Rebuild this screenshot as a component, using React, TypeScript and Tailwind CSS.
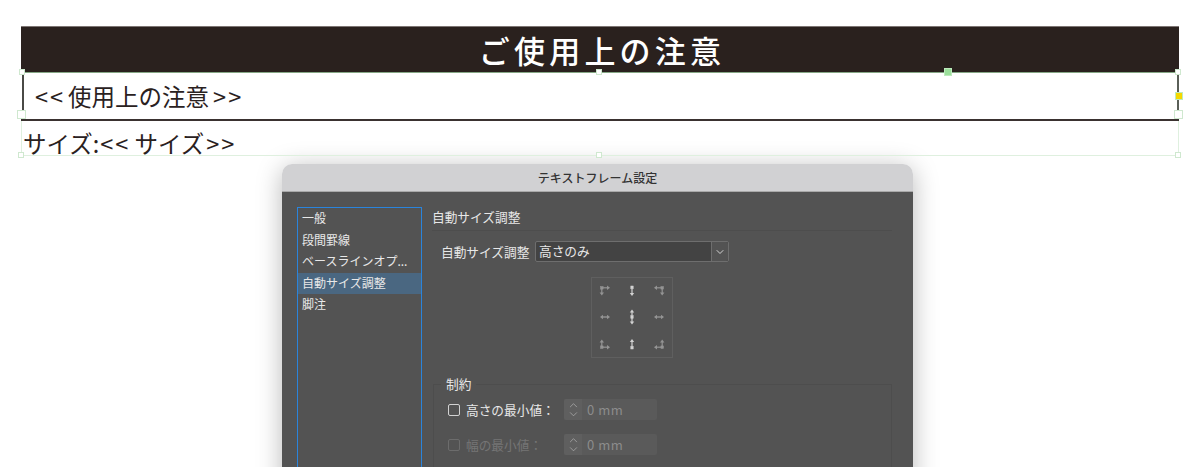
import { ChevronDown, ChevronUp } from 'lucide-react';

const jp = { fontFamily: '"Noto Sans CJK JP", "Noto Sans", sans-serif' };

type AnchorKind = 'corner' | 'edge' | 'side' | 'center';

// one cell of the auto-size anchor grid
function Anchor({ kind, flip = '', bright = false }: { kind: AnchorKind; flip?: string; bright?: boolean }) {
  const color = bright ? 'text-[#d2d2d2]' : 'text-[#949494]';
  return (
    <div className="flex items-center justify-center">
      <svg viewBox="0 0 18 18" className={`w-[18px] h-[18px] ${color} ${flip}`} fill="currentColor" stroke="currentColor">
        {kind === 'corner' && (
          <>
            <rect x="4.5" y="4.5" width="2.6" height="2.6" strokeWidth="0.5" />
            <path d="M7 5.8H11.5" strokeWidth="1.2" fill="none" />
            <path d="M11 3.6L14 5.8L11 8Z" strokeWidth="0" />
            <path d="M5.8 7V11" strokeWidth="1.2" fill="none" />
            <path d="M3.6 10.5L5.8 13.5L8 10.5Z" strokeWidth="0" />
          </>
        )}
        {kind === 'edge' && (
          <>
            <rect x="7.8" y="4" width="2.4" height="2.8" strokeWidth="0.5" />
            <path d="M9 6.5V11.5" strokeWidth="1.2" fill="none" />
            <path d="M6.8 11L9 14L11.2 11Z" strokeWidth="0" />
          </>
        )}
        {kind === 'side' && (
          <>
            <path d="M6 9H12" strokeWidth="1.4" fill="none" />
            <path d="M7 6.8L4 9L7 11.2Z" strokeWidth="0" />
            <path d="M11 6.8L14 9L11 11.2Z" strokeWidth="0" />
          </>
        )}
        {kind === 'center' && (
          <>
            <rect x="7.8" y="7.7" width="2.4" height="2.6" strokeWidth="0.5" />
            <path d="M9 3.5V14.5" strokeWidth="1.2" fill="none" />
            <path d="M6.8 4.4L9 1.4L11.2 4.4Z" strokeWidth="0" />
            <path d="M6.8 13.6L9 16.6L11.2 13.6Z" strokeWidth="0" />
          </>
        )}
      </svg>
    </div>
  );
}

function MinRow({ label, disabled = false }: { label: string; disabled?: boolean }) {
  return (
    <div className="flex items-center h-[21px] pl-[13.5px]">
      <div className={`w-[12px] h-[12px] rounded-[2px] border ${disabled ? 'border-[#6c6c6c]' : 'border-[#d2d2d2]'}`} />
      <div className={`ml-[6.5px] w-[98px] text-[12.7px] ${disabled ? 'text-[#757575]' : 'text-[#e8e8e8]'}`}>{label}</div>
      <div className="flex w-[93px] h-[21px] rounded-[2px] bg-[#5a5a5a]">
        <div className="flex flex-col items-center justify-center w-[18px] bg-[#5f5f5f] rounded-l-[2px] text-[#b0b0b0]">
          <ChevronUp size={13} strokeWidth={1.4} className="-mb-[2px]" />
          <ChevronDown size={13} strokeWidth={1.4} className="-mt-[2px]" />
        </div>
        <div className="ml-[5px] leading-[21px] text-[13px] tracking-[0.5px] text-[#8c8c8c]">0 mm</div>
      </div>
    </div>
  );
}

export default function App() {
  return (
    <div style={jp} className="w-[1200px] h-[467px] overflow-hidden bg-white pt-[26px] px-[21px]">
      <div className="relative w-[1158px]">
        <div className="h-[46px] bg-[#2a211e] border-t border-[#7d7573] flex items-center justify-center pl-[4px] text-white text-[31px] font-medium tracking-[4.2px] leading-none">
          ご使用上の注意
        </div>

        <div className="h-[49px] border-t border-[#86a886] border-b-2 border-b-[#3a3230] flex items-center">
          <div className="w-[1.5px] h-full bg-[#4a4a46] ml-[1px]" />
          <div className="ml-[11.5px] pt-[2px] text-[23.5px] leading-none text-[#2a211e]">
            <span className="tracking-[2px]">{'<<'}</span>
            <span className="ml-[3px]">使用上の注意</span>
            <span className="ml-[4px] tracking-[2px]">{'>>'}</span>
          </div>
          <div className="w-[2px] h-full bg-[#5a5f58] ml-auto" />
        </div>

        <div className="h-[35px] border-b border-x border-[#dff0df] flex items-end pl-[1px]">
          <div className="text-[23.5px] leading-[24px] text-[#2a211e]">
            <span>サイズ:</span>
            <span className="ml-[1px] tracking-[2px]">{'<<'}</span>
            <span className="ml-[4px]">サイズ</span>
            <span className="ml-[2px] tracking-[2px]">{'>>'}</span>
          </div>
        </div>

        {/* frame handles sit on top of the text frames */}
        <div className="absolute left-[-2px] top-[43px] w-[6px] h-[6px] bg-white border border-[#cfe8cf]" />
        <div className="absolute left-[575px] top-[43px] w-[6px] h-[6px] bg-white border border-[#cfe8cf]" />
        <div className="absolute left-[923px] top-[42px] w-[8px] h-[8px] bg-[#9bdf9b] border border-[#bdeabd]" />
        <div className="absolute left-[1154px] top-[43px] w-[6px] h-[6px] bg-white border border-[#cfe8cf]" />
        <div className="absolute left-[1154px] top-[66px] w-[8px] h-[8px] bg-[#f5d800] border border-[#bdeabd]" />
        <div className="absolute left-[-4px] top-[84px] w-[9px] h-[9px] bg-white border border-[#cfe8cf]" />
        <div className="absolute left-[1153px] top-[84px] w-[9px] h-[9px] bg-white border border-[#cfe8cf]" />
        <div className="absolute left-[-3px] top-[126px] w-[6px] h-[6px] bg-white border border-[#cfe8cf]" />
        <div className="absolute left-[575px] top-[126px] w-[6px] h-[6px] bg-white border border-[#cfe8cf]" />
        <div className="absolute left-[1154px] top-[126px] w-[6px] h-[6px] bg-white border border-[#cfe8cf]" />
      </div>

      <div className="ml-[261px] mt-[8px] w-[631px] h-[420px] rounded-t-[10px] shadow-[0_4px_26px_rgba(0,0,0,0.28)]">
        <div className="h-[28px] rounded-t-[10px] bg-[#d1d1d3] border-b border-[#a9a9a9] flex items-center justify-center text-[12px] font-medium text-[#333333]">
          テキストフレーム設定
        </div>
        <div className="flex h-[392px] bg-[#535353] pl-[15px] pt-[15px] text-[12.7px] text-[#e8e8e8]">
          <div className="w-[125px] h-[370px] border border-[#2a84dc] text-[12px]">
            <div className="h-[21.6px] pl-[4px] leading-[20px]">一般</div>
            <div className="h-[21.6px] pl-[4px] leading-[20px]">段間罫線</div>
            <div className="h-[21.6px] pl-[4px] leading-[20px]">ベースラインオプ...</div>
            <div className="h-[21.6px] pl-[4px] leading-[20px] bg-[#4a6781]">自動サイズ調整</div>
            <div className="h-[21.6px] pl-[4px] leading-[20px]">脚注</div>
          </div>

          <div className="ml-[10px] w-[460px]">
            <div className="h-[24px] leading-[20px] border-b border-[#4d4d4d]">自動サイズ調整</div>

            <div className="flex items-center mt-[10px] pl-[9px] h-[21px]">
              <div className="w-[94px]">自動サイズ調整</div>
              <div className="flex w-[194px] h-[21px] rounded-[2px] border border-[#6e6e6e] bg-[#434343]">
                <div className="w-[176px] pl-[3px] leading-[18px] border-r border-[#6e6e6e]">高さのみ</div>
                <div className="flex-1 flex items-center justify-center bg-[#535353] rounded-r-[2px] text-[#e0e0e0]">
                  <ChevronDown size={12} strokeWidth={1.8} />
                </div>
              </div>
            </div>

            <div className="grid grid-cols-3 grid-rows-3 ml-[159px] mt-[15px] w-[82px] h-[81px] border border-[#5f5f5f]">
              <Anchor kind="corner" />
              <Anchor kind="edge" bright />
              <Anchor kind="corner" flip="-scale-x-100" />
              <Anchor kind="side" />
              <Anchor kind="center" bright />
              <Anchor kind="side" />
              <Anchor kind="corner" flip="-scale-y-100" />
              <Anchor kind="edge" flip="-scale-y-100" bright />
              <Anchor kind="corner" flip="-scale-x-100 -scale-y-100" />
            </div>

            <fieldset className="mt-[16px] ml-[1px] w-[459px] h-[120px] border border-[#4d4d4d]">
              <legend className="ml-[7px] px-[5px] leading-[20px]">制約</legend>
              <div className="flex flex-col gap-[14px] pt-[5px]">
                <MinRow label="高さの最小値：" />
                <MinRow label="幅の最小値：" disabled />
              </div>
            </fieldset>
          </div>
        </div>
      </div>
    </div>
  );
}
